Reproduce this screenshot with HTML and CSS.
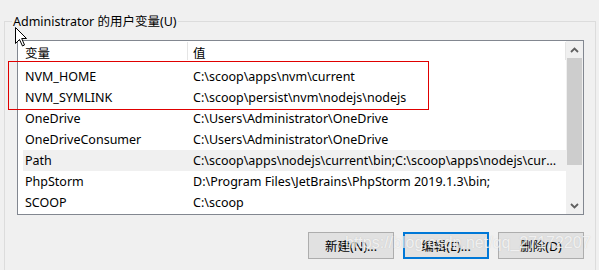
FILE: index.html
```html
<!DOCTYPE html>
<html>
	<head>
		<meta charset="UTF-8">
		<title>环境变量</title>
		<link rel="stylesheet" href="styles.css">
	</head>
	<body>
		<div class="group">
			<div class="group-title">Administrator 的用户变量(U)</div>
			<div class="list">
				<div class="list-body">
					<div class="head">
						<span class="h-name">变量</span>
						<span class="h-sep"></span>
						<span class="h-val">值</span>
						<span class="h-sep h-end"></span>
					</div>
					<div class="row"><span class="c-name">NVM_HOME</span><span class="c-val">C:\scoop\apps\nvm\current</span></div>
					<div class="row"><span class="c-name">NVM_SYMLINK</span><span class="c-val">C:\scoop\persist\nvm\nodejs\nodejs</span></div>
					<div class="row"><span class="c-name">OneDrive</span><span class="c-val">C:\Users\Administrator\OneDrive</span></div>
					<div class="row"><span class="c-name">OneDriveConsumer</span><span class="c-val">C:\Users\Administrator\OneDrive</span></div>
					<div class="row sel"><span class="c-name">Path</span><span class="c-val">C:\scoop\apps\nodejs\current\bin;C:\scoop\apps\nodejs\current;C:\scoop\shims</span></div>
					<div class="row"><span class="c-name">PhpStorm</span><span class="c-val">D:\Program Files\JetBrains\PhpStorm 2019.1.3\bin;</span></div>
					<div class="row"><span class="c-name">SCOOP</span><span class="c-val">C:\scoop</span></div>
				</div>
				<div class="scrollbar">
					<div class="sb-btn">
						<svg width="9" height="6" viewBox="0 0 9 6"><path d="M1 5 L4.5 1.5 L8 5" fill="none" stroke="#606060" stroke-width="1.8"/></svg>
					</div>
					<div class="sb-thumb"></div>
					<div class="sb-track"></div>
					<div class="sb-btn">
						<svg width="9" height="6" viewBox="0 0 9 6"><path d="M1 1 L4.5 4.5 L8 1" fill="none" stroke="#606060" stroke-width="1.8"/></svg>
					</div>
				</div>
			</div>
			<div class="buttons">
				<button class="btn">新建(N)...</button>
				<button class="btn focus">编辑(E)...</button>
				<button class="btn">删除(D)</button>
			</div>
		</div>

		<!-- 标注框 -->
		<div class="mark"></div>
		<!-- 鼠标 -->
		<svg class="cursor" width="13" height="20" viewBox="0 0 13 20">
			<path d="M0.5 0.5 L0.5 16.5 L4.5 12.5 L7.5 19 L9.5 18 L6.7 11.5 L11.5 11.5 Z" fill="#fff" stroke="#000" stroke-width="1"/>
		</svg>
		<div class="watermark">https://blog.csdn.net/qq_27172207</div>
	</body>
</html>
```

FILE: styles.css
```css
*{
	padding:0;
	margin:0;
	box-sizing:border-box;
}
body{
	background:#f0f0f0;
	font-family:"Noto Sans","Noto Sans CJK SC",sans-serif;
	font-size:12.5px;
	color:#000;
	width:599px;
	height:270px;
	overflow:hidden;
	position:relative;
}
.group{
	margin:21px 3px 0 4px;
	height:260px;
	border:1px solid #dcdcdc;
	border-bottom:none;
}
.group-title{
	width:fit-content;
	margin:-8px 0 0 7px;
	padding:0 1px;
	line-height:16px;
	background:#f0f0f0;
}
.list{
	display:flex;
	width:567px;
	height:175px;
	margin:10px 0 0 12px;
	border:1px solid #828790;
	background:#fff;
}
.list-body{
	flex:1;
	min-width:0;
}
.head{
	display:flex;
	height:25px;
	line-height:25px;
}
.h-name{
	width:169px;
	padding-left:7px;
}
.h-sep{
	width:1px;
	height:18px;
	margin-top:1px;
	background:#e5e5e5;
}
.h-val{
	flex:1;
	padding-left:5px;
}
.row{
	display:flex;
	height:21px;
	line-height:21px;
	margin-left:5px;
	white-space:nowrap;
}
.sel{
	background:#f0f0f0;
}
.c-name{
	width:164px;
	padding-left:2px;
}
.c-val{
	flex:1;
	min-width:0;
	padding-left:6px;
	padding-right:6px;
	overflow:hidden;
	text-overflow:ellipsis;
}
.scrollbar{
	width:17px;
	display:flex;
	flex-direction:column;
	background:#f0f0f0;
}
.sb-btn{
	height:17px;
	display:flex;
	align-items:center;
	justify-content:center;
}
.sb-thumb{
	height:107px;
	margin:0 1px;
	background:#cdcdcd;
}
.sb-track{
	flex:1;
}
.buttons{
	display:flex;
	justify-content:flex-end;
	gap:9px;
	width:567px;
	margin:17px 0 0 12px;
}
.btn{
	width:86px;
	height:27px;
	border:1px solid #adadad;
	background:#e1e1e1;
	font-family:inherit;
	font-size:12.5px;
	color:#000;
}
.focus{
	border:2px solid #0078d7;
}
.mark{
	position:absolute;
	left:8px;
	top:61px;
	width:421px;
	height:49px;
	border:1px solid #e00000;
}
.cursor{
	position:absolute;
	left:15px;
	top:27px;
}
.watermark{
	position:absolute;
	left:345px;
	top:234px;
	font-family:"Liberation Sans",sans-serif;
	font-size:16px;
	color:rgba(255,255,255,0.75);
	text-shadow:0 0 1px rgba(160,160,160,0.5);
}
```
